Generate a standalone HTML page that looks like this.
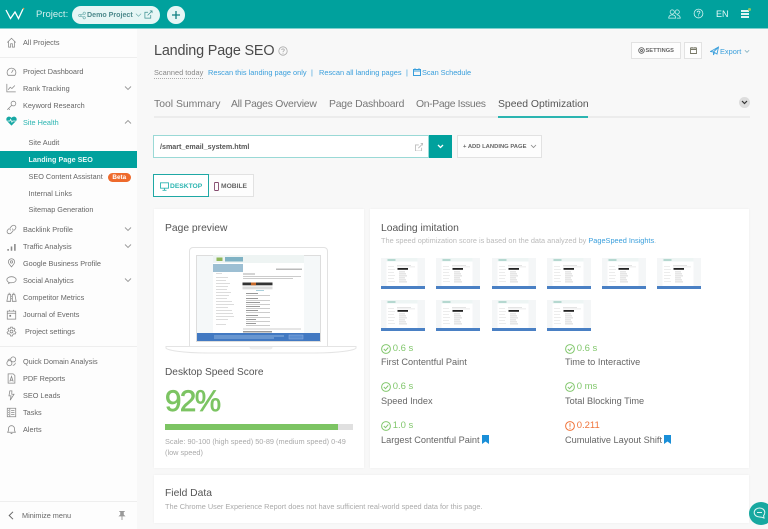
<!DOCTYPE html>
<html><head><meta charset="utf-8">
<style>
*{box-sizing:border-box}
html,body{margin:0;padding:0}
body{width:768px;height:529px;overflow:hidden;background:#f8f8f8;font-family:"Liberation Sans",sans-serif;color:#555;position:relative}
#w{position:absolute;left:0;top:0;width:768px;height:529px;overflow:hidden;background:#f8f8f8;filter:blur(.3px)}
.a{position:absolute;white-space:nowrap}
#top{left:0;top:0;width:768px;height:29px;background:#00a19d;border-bottom:1px solid #7fd0ce}
#side{left:0;top:29px;width:137px;height:500px;background:#fdfdfd}
.m{position:absolute;left:23px;font-size:7.3px;color:#666;white-space:nowrap;line-height:10px;margin-top:.6px}
.s{position:absolute;left:28.5px;font-size:7.3px;color:#666;white-space:nowrap;line-height:10px;margin-top:.6px}
.ic{position:absolute;left:5.5px;width:11px;height:11px;margin-top:1px;fill:none;stroke:#888;stroke-width:.9}
.ch{position:absolute;left:124px;width:8px;height:6px;fill:none;stroke:#999;stroke-width:.9}
.hr{position:absolute;left:0;width:137px;height:1px;background:#eee}
.card{position:absolute;background:#fff;box-shadow:0 0 2px #ececec}
.link{color:#3a9fdc}
.sm{font-size:7.4px;line-height:10px;top:67.5px}
.tab{position:absolute;top:97.5px;font-size:10.4px;color:#777;white-space:nowrap;line-height:13px}
.val{position:absolute;font-size:9.5px;color:#82c76d;white-space:nowrap;line-height:12px}
.lab{position:absolute;font-size:9.2px;color:#666;white-space:nowrap;line-height:12px;margin-top:.4px}
.ok{position:absolute;width:10px;height:10px;fill:none;stroke:#82c76d;stroke-width:1}
.bm{position:absolute;width:7px;height:9px;fill:#1a8fd8}
.th{position:absolute;width:44px;height:31px}
.btn{position:absolute;background:#fdfdfd;border:1px solid #e2e2e2}
</style></head><body>
<svg width="0" height="0" style="position:absolute"><defs>
<symbol id="th" viewBox="0 0 44 31">
<rect width="44" height="31" fill="#f4f6f7"/>
<rect x="5.5" y="0" width="31" height="28" fill="#fff"/>
<rect x="5.5" y="0" width="31" height="3.5" fill="#eef5f4"/>
<rect x="6.5" y="1" width="8" height="2" fill="#b5d8d0"/>
<g fill="#e8e8e8"><rect x="7" y="8" width="6" height=".8"/><rect x="7" y="11" width="7" height=".8"/><rect x="7" y="14" width="6" height=".8"/><rect x="7" y="17" width="7" height=".8"/><rect x="7" y="20" width="6" height=".8"/><rect x="7" y="23" width="7" height=".8"/></g>
<rect x="16" y="7" width="14" height=".8" fill="#ddd"/>
<rect x="16" y="8.5" width="18" height=".8" fill="#e6e6e6"/>
<rect x="16.5" y="10" width="10.5" height="1.8" fill="#222"/>
<g fill="#ccc"><rect x="18" y="13.5" width="6" height=".8"/><rect x="18" y="15.5" width="7" height=".8"/><rect x="18" y="17.5" width="8" height=".8"/><rect x="18" y="19.5" width="6" height=".8"/><rect x="18" y="21.5" width="7" height=".8"/><rect x="18" y="23.5" width="8" height=".8"/></g>
<rect x="0" y="28" width="44" height="3" fill="#4a80c4"/>
</symbol>
</defs></svg>
<div id="w">
<div class="a" id="top"></div>
<svg class="a" style="left:5px;top:7px" width="20" height="14" viewBox="0 0 20 14" fill="none" stroke="#fff" stroke-width="1.3"><path d="M1 3L5.5 11.5L10 5L13.5 11.5L18 2"/><circle cx="18.5" cy="1.6" r=".8" fill="#f0a050" stroke="none"/></svg>
<div class="a" style="left:36px;top:7.8px;font-size:9.5px;color:#d4f0ee;line-height:14px">Project:</div>
<div class="a" style="left:71.5px;top:6px;width:88px;height:17.5px;background:#e6f6f5;border-radius:9px"></div>
<svg class="a" style="left:78px;top:10.5px;fill:none;stroke:#6aa;stroke-width:.7" width="8" height="9" viewBox="0 0 9 9"><circle cx="2" cy="4.5" r="1.3"/><circle cx="7" cy="2" r="1.3"/><circle cx="7" cy="7" r="1.3"/><path d="M3.2 4L5.8 2.6M3.2 5L5.8 6.4"/></svg>
<div class="a" style="left:87px;top:9.6px;font-size:7.1px;font-weight:bold;color:#4e8a8c;line-height:11px">Demo Project</div>
<svg class="a" style="left:134.5px;top:12px;fill:none;stroke:#6aa;stroke-width:.8" width="7" height="6" viewBox="0 0 8 6"><path d="M1 1.5L4 4.5L7 1.5"/></svg>
<svg class="a" style="left:144px;top:10px;fill:none;stroke:#3a8f8f;stroke-width:.8" width="9" height="9" viewBox="0 0 10 10"><path d="M7.5 5.5V9H1V2.5H4.5M4 6L9 1M6.5 1H9V3.5"/></svg>
<div class="a" style="left:167px;top:6px;width:17.5px;height:17.5px;background:#e6f6f5;border-radius:50%"></div>
<svg class="a" style="left:171px;top:10px;stroke:#0f7f80;stroke-width:1.3" width="10" height="10" viewBox="0 0 10 10"><path d="M5 1V9M1 5H9"/></svg>
<svg class="a" style="left:667.5px;top:8.5px;fill:none;stroke:#d5f2f0;stroke-width:.8" width="13" height="10" viewBox="0 0 14 11"><circle cx="4.5" cy="3.3" r="2.3"/><circle cx="10" cy="3.3" r="2.3"/><path d="M.6 10C.8 7.5 2 6.5 4.5 6.5S8.2 7.5 8.4 10ZM9.5 6.5C11.8 6.5 13 7.5 13.4 10H9.6"/></svg>
<svg class="a" style="left:692.5px;top:8px;fill:none;stroke:#d5f2f0;stroke-width:.9" width="11" height="11" viewBox="0 0 12 12"><circle cx="6" cy="6" r="4.8"/><path d="M4.5 4.8C4.5 2.9 7.6 2.9 7.6 4.7C7.6 5.8 6 5.9 6 7.2M6 8V9"/></svg>
<div class="a" style="left:716px;top:7.5px;font-size:9px;color:#eafafa;line-height:13px">EN</div>
<div class="a" style="left:741px;top:10px;width:8px;height:2px;background:#e0f5f3"></div>
<div class="a" style="left:741px;top:13px;width:8px;height:2px;background:#e0f5f3"></div>
<div class="a" style="left:741px;top:16px;width:8px;height:2px;background:#e0f5f3"></div>
<div class="a" style="left:747.5px;top:7.5px;width:3.5px;height:3.5px;border-radius:50%;background:#8dc660"></div>

<div class="a" id="side"></div>
<svg class="ic" style="top:36px" viewBox="0 0 13 13"><path d="M1.5 6.5L6.5 1.5L11.5 6.5M3 5.5V12H5.5V8H7.5V12H10V5.5"/></svg>
<div class="m" style="top:37px">All Projects</div>
<div class="hr" style="top:57px"></div>
<svg class="ic" style="top:65px" viewBox="0 0 13 13"><path d="M2.5 11A5.2 5.2 0 1 1 10.5 11ZM6.5 8L8.5 4.5"/></svg>
<div class="m" style="top:66px">Project Dashboard</div>
<svg class="ic" style="top:82px" viewBox="0 0 13 13"><path d="M1 1V10.5H11.5M2.5 8L5 5L7 6.5L10.5 3"/></svg>
<div class="m" style="top:83px">Rank Tracking</div>
<svg class="ch" style="top:85px" viewBox="0 0 8 6"><path d="M1 1.5L4 4.5L7 1.5"/></svg>
<svg class="ic" style="top:99px" viewBox="0 0 13 13"><circle cx="8.8" cy="4.2" r="2.8"/><path d="M6.8 6.2L1.5 11.5M3 10L4.5 11.5"/></svg>
<div class="m" style="top:100px">Keyword Research</div>
<svg class="a" style="left:5.5px;top:116px" width="11" height="10" viewBox="0 0 13 12"><path d="M6.5 11.5L1 6C-.8 3.5 1 .7 3.5.7C4.8.7 5.8 1.3 6.5 2.4C7.2 1.3 8.2.7 9.5.7C12 .7 13.8 3.5 12 6Z" fill="#17a8a4"/><path d="M1.5 6H4.5L5.5 4L7 7.5L8 6H11.5" fill="none" stroke="#fff" stroke-width=".8"/></svg>
<div class="m" style="top:117px;color:#2bb5b1">Site Health</div>
<svg class="ch" style="top:119px" viewBox="0 0 8 6"><path d="M1 4.5L4 1.5L7 4.5"/></svg>
<div class="s" style="top:137px">Site Audit</div>
<div class="a" style="left:0;top:151px;width:137px;height:17px;background:#00a19d"></div>
<div class="s" style="top:154.5px;color:#e6f8f7;font-weight:bold;font-size:7.2px">Landing Page SEO</div>
<div class="s" style="top:171px">SEO Content Assistant</div>
<div class="a" style="left:107.5px;top:172.5px;width:23.5px;height:9px;border-radius:5px;background:#ee6a2c;color:#fff;font-size:6.3px;font-weight:bold;text-align:center;line-height:9px">Beta</div>
<div class="s" style="top:188px">Internal Links</div>
<div class="s" style="top:204px">Sitemap Generation</div>
<svg class="ic" style="top:223px" viewBox="0 0 13 13"><path d="M5.5 7.5C4 6 4.5 4.8 5.5 3.8L7 2.3C8.2 1.1 10 1.3 11 2.3S12 5 10.8 6.2L9.5 7.5M7.5 5.5C9 7 8.5 8.2 7.5 9.2L6 10.7C4.8 11.9 3 11.7 2 10.7S1 8 2.2 6.8L3.5 5.5"/></svg>
<div class="m" style="top:224px">Backlink Profile</div>
<svg class="ch" style="top:226px" viewBox="0 0 8 6"><path d="M1 1.5L4 4.5L7 1.5"/></svg>
<svg class="ic" style="top:240px" viewBox="0 0 13 13"><path d="M2.5 9.5V11.5M6.5 6.5V11.5M10.5 3.5V11.5" stroke-width="1.8"/></svg>
<div class="m" style="top:241px">Traffic Analysis</div>
<svg class="ch" style="top:243px" viewBox="0 0 8 6"><path d="M1 1.5L4 4.5L7 1.5"/></svg>
<svg class="ic" style="top:257px" viewBox="0 0 13 13"><path d="M6.5 10.5C4.5 8 2.8 6.5 2.8 4.6A3.7 3.7 0 0 1 10.2 4.6C10.2 6.5 8.5 8 6.5 10.5Z"/><circle cx="6.5" cy="4.6" r="1.4"/></svg>
<div class="m" style="top:258px">Google Business Profile</div>
<svg class="ic" style="top:274px" viewBox="0 0 13 13"><path d="M3 10.5L3.5 8.8C2 8 1 7 1 5.6C1 3.4 3.5 2 6.5 2S12 3.4 12 5.6S9.5 9.2 6.5 9.2C5.5 9.2 4.8 9.1 4.2 9Z"/></svg>
<div class="m" style="top:275px">Social Analytics</div>
<svg class="ch" style="top:277px" viewBox="0 0 8 6"><path d="M1 1.5L4 4.5L7 1.5"/></svg>
<svg class="ic" style="top:291px" viewBox="0 0 13 13"><path d="M1 11L2.5 3H5.5V11ZM7.5 11V3H10.5L12 11ZM5.5 5H7.5M5.5 8H7.5M3 1.5H5M8 1.5H10"/></svg>
<div class="m" style="top:292px">Competitor Metrics</div>
<svg class="ic" style="top:308px" viewBox="0 0 13 13"><path d="M1.5 2.5H11.5V12H1.5ZM1.5 5H11.5M4 1V3M9 1V3"/><rect x="4" y="7" width="2" height="2" fill="#777" stroke="none"/></svg>
<div class="m" style="top:309px">Journal of Events</div>
<svg class="ic" style="top:325px" viewBox="0 0 13 13"><path d="M5.4 1.3H7.6L8 3L9.5 2.5L10.8 4L9.8 5.4L10.5 6.5L11.8 7.5L10.8 9.5L9.3 9.2L8 10.3L7.6 11.8H5.4L5 10.3L3.7 9.2L2.2 9.5L1.2 7.5L2.5 6.5L3.2 5.4L2.2 4L3.5 2.5L5 3Z"/><circle cx="6.5" cy="6.5" r="1.7"/></svg>
<div class="m" style="left:25px;top:326.5px">Project settings</div>
<div class="hr" style="top:346px"></div>
<svg class="ic" style="top:355px" viewBox="0 0 13 13"><circle cx="4" cy="8.5" r="3"/><circle cx="8.5" cy="4" r="3"/><path d="M5 3.5C3 3.5 2.5 4.5 2 5.5M11 8C11 10 9.5 11 8 11"/></svg>
<div class="m" style="top:356px">Quick Domain Analysis</div>
<svg class="ic" style="top:372px" viewBox="0 0 13 13"><path d="M2.5 1H8.5L10.5 3V12H2.5ZM4.5 10L6.5 4L8.5 10M5 8.5H8"/></svg>
<div class="m" style="top:373px">PDF Reports</div>
<svg class="ic" style="top:389px" viewBox="0 0 13 13"><path d="M7 1H4.5L3.5 7H6L5 12L9.5 5H6.8Z"/></svg>
<div class="m" style="top:390px">SEO Leads</div>
<svg class="ic" style="top:406px" viewBox="0 0 13 13"><path d="M1.5 1.5H11.5V11.5H1.5ZM4.5 1.5V11.5M6 4H10M6 6.5H10M6 9H10M2.5 4H3.5M2.5 6.5H3.5M2.5 9H3.5"/></svg>
<div class="m" style="top:407px">Tasks</div>
<svg class="ic" style="top:423px" viewBox="0 0 13 13"><path d="M2 9.8C3 8.5 3 7.5 3 5.5C3 3.5 4.5 2 6.5 2S10 3.5 10 5.5C10 7.5 10 8.5 11 9.8ZM5.5 11.3H7.5"/></svg>
<div class="m" style="top:424px">Alerts</div>
<div class="hr" style="top:501px"></div>
<svg class="a" style="left:8px;top:511px;fill:none;stroke:#666;stroke-width:1" width="6" height="9" viewBox="0 0 6 9"><path d="M5 .8L1.2 4.5L5 8.2"/></svg>
<div class="m" style="left:22px;top:510.5px">Minimize menu</div>
<svg class="a" style="left:118px;top:511px;fill:#999" width="8" height="9" viewBox="0 0 9 10"><path d="M1.5 0H7.5V1H6.5V4L8.5 6H5V10H4V6H.5L2.5 4V1H1.5Z"/></svg>

<div class="a" style="left:154px;top:40.5px;font-size:14.4px;letter-spacing:-.18px;color:#4a4a4a;line-height:20px">Landing Page SEO</div>
<svg class="a" style="left:278px;top:46px;fill:none;stroke:#aaa;stroke-width:.8" width="10" height="10" viewBox="0 0 10 10"><circle cx="5" cy="5" r="4.2"/><path d="M3.7 4C3.7 2.6 6.3 2.6 6.3 4C6.3 4.9 5 4.9 5 6M5 6.8V7.7"/></svg>
<div class="a sm" style="left:154px;color:#888;border-bottom:1px dotted #aaa">Scanned today</div>
<div class="a link sm" style="left:208px">Rescan this landing page only</div>
<div class="a link sm" style="left:311px">|</div>
<div class="a link sm" style="left:319px">Rescan all landing pages</div>
<div class="a link sm" style="left:406px">|</div>
<svg class="a" style="left:413px;top:68px;fill:none;stroke:#3a9fdc;stroke-width:1" width="8" height="8" viewBox="0 0 8 8"><path d="M.5 1.5H7.5V7.5H.5ZM.5 3H7.5M2 .3V2M6 .3V2"/></svg>
<div class="a link sm" style="left:422px;letter-spacing:-.05px">Scan Schedule</div>

<div class="tab" style="left:154px">Tool Summary</div>
<div class="tab" style="left:231px;letter-spacing:-.25px">All Pages Overview</div>
<div class="tab" style="left:329px;letter-spacing:-.2px">Page Dashboard</div>
<div class="tab" style="left:416px;letter-spacing:-.35px">On-Page Issues</div>
<div class="tab" style="left:498px;color:#555">Speed Optimization</div>
<div class="a" style="left:154px;top:116px;width:596px;height:2px;background:#ececec"></div>
<div class="a" style="left:498px;top:116px;width:90px;height:2px;background:#2bb5b1"></div>
<div class="a" style="left:739px;top:97px;width:11px;height:11px;border-radius:50%;background:#ddd"></div>
<svg class="a" style="left:741px;top:100px;fill:none;stroke:#333;stroke-width:1.2" width="7" height="5" viewBox="0 0 7 5"><path d="M1 1L3.5 3.5L6 1"/></svg>

<div class="btn" style="left:631px;top:42px;width:50px;height:17px"></div>
<svg class="a" style="left:637.5px;top:47px;fill:none;stroke:#666;stroke-width:.9" width="7" height="7" viewBox="0 0 7 7"><circle cx="3.5" cy="3.5" r="2.8"/><circle cx="3.5" cy="3.5" r="1"/></svg>
<div class="a" style="left:645.5px;top:46.6px;font-size:5.7px;font-weight:bold;color:#666;line-height:9px">SETTINGS</div>
<div class="btn" style="left:684px;top:42px;width:18px;height:17px"></div>
<svg class="a" style="left:690px;top:47px;fill:none;stroke:#776;stroke-width:.9" width="7" height="7" viewBox="0 0 7 7"><path d="M.5 1H6.5V6.5H.5ZM.5 2.5H6.5M2 0V1.5M5 0V1.5"/></svg>
<svg class="a" style="left:710px;top:45.5px;fill:none;stroke:#3a9fdc;stroke-width:.9" width="9" height="10" viewBox="0 0 9 10"><path d="M.5 5.5L8.5 1L7 8L4.5 6.5L3.5 9V6ZM3.5 6L8.5 1"/></svg>
<div class="a link" style="left:720px;top:45.5px;font-size:7.4px;line-height:11px">Export</div>
<svg class="a" style="left:743.5px;top:48.5px;fill:none;stroke:#7ab;stroke-width:.9" width="6" height="5" viewBox="0 0 7 5"><path d="M1 1L3.5 3.5L6 1"/></svg>

<div class="a" style="left:153px;top:135px;width:276px;height:23px;background:#fff;border:1px solid #9ad9d6"></div>
<div class="a" style="left:160px;top:141.5px;font-size:7.15px;font-weight:bold;color:#555;line-height:10px">/smart_email_system.html</div>
<svg class="a" style="left:414.5px;top:142.5px;fill:none;stroke:#bbb;stroke-width:.9" width="8.5" height="8.5" viewBox="0 0 9 9"><path d="M7 5V8.5H.5V2H4M3.5 5.5L8.5.5M6 .5H8.5V3"/></svg>
<div class="a" style="left:429px;top:135px;width:23px;height:23px;background:#00a19d"></div>
<svg class="a" style="left:437px;top:144px;fill:none;stroke:#fff;stroke-width:1.3" width="7" height="5" viewBox="0 0 7 5"><path d="M1 1L3.5 3.5L6 1"/></svg>
<div class="btn" style="left:457px;top:135px;width:85px;height:23px"></div>
<div class="a" style="left:463px;top:142.6px;font-size:5.85px;font-weight:bold;color:#666;line-height:9px">+ ADD LANDING PAGE</div>
<svg class="a" style="left:530px;top:144px;fill:none;stroke:#888;stroke-width:.8" width="7" height="5" viewBox="0 0 7 5"><path d="M1 1L3.5 3.5L6 1"/></svg>

<div class="btn" style="left:208px;top:174px;width:46px;height:23px"></div>
<div class="a" style="left:153px;top:174px;width:56px;height:23px;background:#fff;border:1px solid #1fa8a5"></div>
<svg class="a" style="left:160px;top:181.5px;fill:none;stroke:#2bb5b1;stroke-width:.9" width="9" height="9" viewBox="0 0 9 9"><path d="M.5 .8H8.5V6.2H.5ZM4.5 6.2V8M2.5 8.3H6.5"/></svg>
<div class="a" style="left:170px;top:181.6px;font-size:6.7px;font-weight:bold;color:#2bb5b1;line-height:10px">DESKTOP</div>
<svg class="a" style="left:214px;top:181.5px;fill:none;stroke:#854b6e;stroke-width:.9" width="5" height="9" viewBox="0 0 5 9"><rect x=".5" y=".5" width="4" height="8" rx=".6"/></svg>
<div class="a" style="left:221px;top:181.6px;font-size:6.7px;font-weight:bold;color:#666;line-height:10px">MOBILE</div>

<div class="card" style="left:154px;top:209px;width:210px;height:259px"></div>
<div class="card" style="left:370px;top:209px;width:379px;height:259px"></div>
<div class="card" style="left:154px;top:475px;width:595px;height:48px"></div>

<div class="a" style="left:165px;top:221.5px;font-size:10.3px;color:#555;line-height:13px">Page preview</div>
<div class="a" style="left:189px;top:247px;width:139px;height:100px;border:1px solid #e2e2e2;border-radius:4px 4px 0 0;background:#fff"></div>
<div class="a" style="left:196px;top:254.5px;width:125px;height:87px;background:#f5f8f9;border:1px solid #ddd"></div>
<div class="a" style="left:213px;top:255px;width:91px;height:79px;background:#fff"></div>
<svg class="a" style="left:196px;top:254px" width="125" height="88" viewBox="0 0 125 88">
<rect x="17" y="1" width="91" height="8" fill="#eef4f3"/>
<rect x="20.5" y="3.5" width="6" height="3.5" fill="#8fb75a"/>
<rect x="29" y="3" width="18" height="4.5" fill="#7fb2c4"/>
<rect x="17" y="10" width="30" height="8" fill="#9dbfd3"/>
<rect x="80" y="14.5" width="26" height="1.5" fill="#bbb"/>
<g fill="#dcdcdc"><rect x="20" y="19" width="6" height="1"/><rect x="20" y="23" width="12" height="1"/><rect x="20" y="26" width="10" height="1"/><rect x="20" y="29" width="14" height="1"/><rect x="20" y="32" width="12" height="1"/><rect x="20" y="35" width="11" height="1"/><rect x="20" y="38" width="15" height="1"/><rect x="20" y="41" width="13" height="1"/><rect x="20" y="44" width="11" height="1"/><rect x="20" y="47" width="16" height="1"/><rect x="20" y="50" width="18" height="1"/><rect x="20" y="53" width="12" height="1"/><rect x="20" y="56" width="16" height="1"/><rect x="20" y="59" width="17" height="1"/><rect x="20" y="62" width="18" height="1"/><rect x="20" y="65" width="12" height="1"/><rect x="20" y="70" width="10" height="1"/></g>
<rect x="47" y="19.5" width="12" height="1" fill="#aaa"/><rect x="47" y="22" width="58" height="1" fill="#ccc"/><rect x="47" y="24" width="50" height="1" fill="#ccc"/>
<rect x="46.5" y="28.5" width="30" height="2.8" fill="#333"/><rect x="55" y="28.5" width="5" height="2.8" fill="#c86a2a"/>
<rect x="46.5" y="32.5" width="30" height="2.8" fill="#ddd"/>
<rect x="60" y="36" width="8" height="1" fill="#a9d0dc"/>
<g fill="#999"><rect x="50" y="39" width="12" height="1"/><rect x="50" y="44" width="12" height="1"/><rect x="50" y="48" width="14" height="1"/><rect x="50" y="52" width="14" height="1"/><rect x="50" y="56" width="12" height="1"/><rect x="50" y="61" width="12" height="1"/><rect x="50" y="65" width="10" height="1"/><rect x="50" y="69" width="10" height="1"/></g>
<g fill="#ccc"><rect x="50" y="41" width="24" height="1"/><rect x="50" y="46" width="24" height="1"/><rect x="50" y="50" width="24" height="1"/><rect x="50" y="54" width="24" height="1"/><rect x="50" y="58" width="24" height="1"/><rect x="50" y="63" width="24" height="1"/><rect x="50" y="67" width="24" height="1"/><rect x="50" y="71" width="24" height="1"/></g>
<rect x="47" y="74.5" width="58" height="1" fill="#ccc"/>
<rect x="47" y="77" width="29" height="1.5" fill="#999"/>
<rect x="1" y="79" width="123" height="8" fill="#4279c2"/>
<rect x="18" y="81.5" width="70" height="1" fill="#8fb2dd"/><rect x="18" y="83.5" width="60" height="1" fill="#8fb2dd"/>
<rect x="93" y="81" width="14" height="4" fill="#5b8dd0" stroke="#8fb0dd" stroke-width=".5"/>
</svg>
<svg class="a" style="left:164px;top:345px" width="194" height="10" viewBox="0 0 194 10"><path d="M2 1.5H192V3C192 5 176 8 150 8H44C18 8 2 5 2 3Z" fill="#fff" stroke="#e4e4e4"/><path d="M86 2H108V3C108 3.7 107 4 106 4H88C87 4 86 3.7 86 3Z" fill="#f2f2f2" stroke="#e6e6e6" stroke-width=".5"/></svg>

<div class="a" style="left:165px;top:365.5px;font-size:10.15px;color:#555;line-height:13px">Desktop Speed Score</div>
<div class="a" style="left:165px;top:383.5px;font-size:29.5px;-webkit-text-stroke:.7px #7cc463;letter-spacing:-1.5px;color:#7cc463;line-height:36px">92%</div>
<div class="a" style="left:165px;top:424px;width:188px;height:5.5px;background:#e0e0e0"></div>
<div class="a" style="left:165px;top:424px;width:173px;height:5.5px;background:#7cc463"></div>
<div class="a" style="left:165px;top:435.5px;width:190px;font-size:7.35px;color:#aaa;line-height:11px;white-space:normal">Scale: 90-100 (high speed) 50-89 (medium speed) 0-49 (low speed)</div>

<div class="a" style="left:381px;top:221.5px;font-size:10.3px;color:#555;line-height:13px">Loading imitation</div>
<div class="a" style="left:381px;top:236px;font-size:7.35px;color:#bbb;line-height:10px">The speed optimization score is based on the data analyzed by <span class="link">PageSpeed Insights</span>.</div>

<svg class="th" style="left:381px;top:257.5px"><use href="#th"/></svg>
<svg class="th" style="left:436px;top:257.5px"><use href="#th"/></svg>
<svg class="th" style="left:491.5px;top:257.5px"><use href="#th"/></svg>
<svg class="th" style="left:547px;top:257.5px"><use href="#th"/></svg>
<svg class="th" style="left:602px;top:257.5px"><use href="#th"/></svg>
<svg class="th" style="left:657px;top:257.5px"><use href="#th"/></svg>
<svg class="th" style="left:381px;top:299.5px"><use href="#th"/></svg>
<svg class="th" style="left:436px;top:299.5px"><use href="#th"/></svg>
<svg class="th" style="left:491.5px;top:299.5px"><use href="#th"/></svg>
<svg class="th" style="left:547px;top:299.5px"><use href="#th"/></svg>

<svg class="ok" style="left:381px;top:343.5px" viewBox="0 0 10 10"><circle cx="5" cy="5" r="4.4"/><path d="M2.8 5L4.5 6.7L7.3 3.5"/></svg>
<div class="val" style="left:392.7px;top:342.5px">0.6 s</div>
<div class="lab" style="left:381px;top:356px">First Contentful Paint</div>
<svg class="ok" style="left:565px;top:343.5px" viewBox="0 0 10 10"><circle cx="5" cy="5" r="4.4"/><path d="M2.8 5L4.5 6.7L7.3 3.5"/></svg>
<div class="val" style="left:576.7px;top:342.5px">0.6 s</div>
<div class="lab" style="left:565px;top:356px">Time to Interactive</div>
<svg class="ok" style="left:381px;top:382px" viewBox="0 0 10 10"><circle cx="5" cy="5" r="4.4"/><path d="M2.8 5L4.5 6.7L7.3 3.5"/></svg>
<div class="val" style="left:392.7px;top:381px">0.6 s</div>
<div class="lab" style="left:381px;top:394.5px">Speed Index</div>
<svg class="ok" style="left:565px;top:382px" viewBox="0 0 10 10"><circle cx="5" cy="5" r="4.4"/><path d="M2.8 5L4.5 6.7L7.3 3.5"/></svg>
<div class="val" style="left:576.7px;top:381px">0 ms</div>
<div class="lab" style="left:565px;top:394.5px">Total Blocking Time</div>
<svg class="ok" style="left:381px;top:420.5px" viewBox="0 0 10 10"><circle cx="5" cy="5" r="4.4"/><path d="M2.8 5L4.5 6.7L7.3 3.5"/></svg>
<div class="val" style="left:392.7px;top:419.5px">1.0 s</div>
<div class="lab" style="left:381px;top:433.5px">Largest Contentful Paint</div>
<svg class="bm" style="left:482px;top:435px" viewBox="0 0 7 9"><path d="M0 0H7V9L3.5 6.5L0 9Z"/></svg>
<svg class="ok" style="left:565px;top:420.5px;stroke:#f0743a" viewBox="0 0 10 10"><circle cx="5" cy="5" r="4.4"/><path d="M5 2.3V5.8M5 6.8V7.8"/></svg>
<div class="val" style="left:576.7px;top:419.5px;color:#f0743a">0.211</div>
<div class="lab" style="left:565px;top:433.5px">Cumulative Layout Shift</div>
<svg class="bm" style="left:664px;top:435px" viewBox="0 0 7 9"><path d="M0 0H7V9L3.5 6.5L0 9Z"/></svg>

<div class="a" style="left:165px;top:486.5px;font-size:10.3px;color:#555;line-height:13px">Field Data</div>
<div class="a" style="left:165px;top:501.5px;font-size:7.35px;color:#aaa;line-height:10px">The Chrome User Experience Report does not have sufficient real-world speed data for this page.</div>

<div class="a" style="left:749px;top:501.5px;width:24px;height:23px;border-radius:50%;background:#17a8a0"></div>
<svg class="a" style="left:753px;top:507px;fill:none;stroke:#e0f5f3;stroke-width:1" width="13" height="12" viewBox="0 0 13 12"><path d="M6.5 1C3.5 1 1.2 3 1.2 5.5S3.5 10 6.5 10C8 10 9.5 10.3 11 11L10.6 8.5C11.4 7.7 11.8 6.6 11.8 5.5C11.8 3 9.5 1 6.5 1ZM4 5.5H9"/></svg>
</div>
</body></html>
